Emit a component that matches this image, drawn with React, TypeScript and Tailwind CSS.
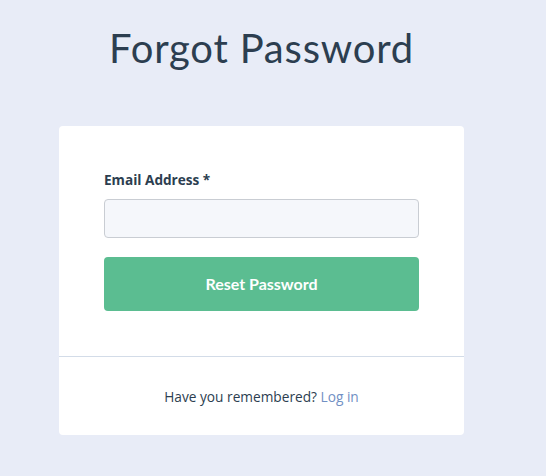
import React from "react";

export default function App() {
  return (
    <div className="min-h-[476px] w-full bg-[#e8ecf7]" style={{ fontFamily: "Lato, 'Noto Sans', sans-serif" }}>
      <div className="ml-[59px] w-[405px] pt-[24px]">
        <h1 className="text-center text-[40px] leading-[48px] font-normal tracking-[0.8px] text-[#2c3e50]">Forgot Password</h1>
        <div className="mt-[54px] rounded-[4px] bg-white">
          <div className="px-[45px] pt-[44px] pb-[45px]">
            <label className="block font-['Open_Sans',sans-serif] text-[13.6px] leading-[20px] font-bold text-[#2c3e50]">Email Address *</label>
            <input
              type="email"
              className="mt-[9px] block h-[39px] w-full rounded-[4px] border border-[#c9cdd3] bg-[#f5f7fb] px-3 outline-none"
            />
            <button className="mt-[19px] flex h-[54px] w-full items-center justify-center rounded-[4px] bg-[#5bbd91] text-[16px] font-bold text-white">
              Reset Password
            </button>
          </div>
          <div className="border-t border-[#d3dce8] pt-[30px] pb-[28px] text-center font-['Open_Sans',sans-serif] text-[13.7px] leading-[20px] text-[#2c3e50]">
            Have you remembered? <a className="text-[#7190c4]">Log in</a>
          </div>
        </div>
      </div>
    </div>
  );
}
